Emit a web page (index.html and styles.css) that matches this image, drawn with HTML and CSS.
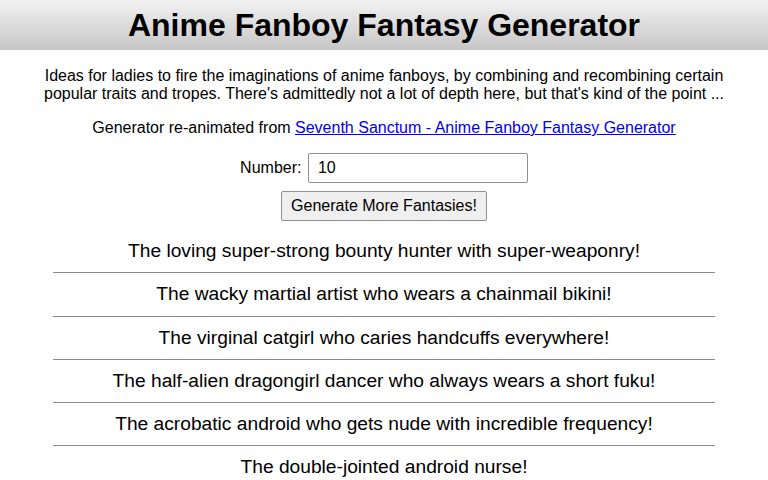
FILE: index.html
```html
<!DOCTYPE html>
<html>
<head>
<meta charset="utf-8">
<link rel="stylesheet" href="styles.css">
</head>
<body>
<header class="top">
  <h1 class="title">Anime Fanboy Fantasy Generator</h1>
</header>
<main class="main">
  <p class="intro">Ideas for ladies to fire the imaginations of anime fanboys, by combining and recombining certain popular traits and tropes. There's admittedly not a lot of depth here, but that's kind of the point ...</p>
  <p class="credit">Generator re-animated from <a href="#">Seventh Sanctum - Anime Fanboy Fantasy Generator</a></p>
  <div class="form">
    <label class="num-row">Number: <input class="num" type="text" value="10"></label>
    <button class="gen">Generate More Fantasies!</button>
  </div>
  <ul class="results">
    <li>The loving super-strong bounty hunter with super-weaponry!</li>
    <li>The wacky martial artist who wears a chainmail bikini!</li>
    <li>The virginal catgirl who caries handcuffs everywhere!</li>
    <li>The half-alien dragongirl dancer who always wears a short fuku!</li>
    <li>The acrobatic android who gets nude with incredible frequency!</li>
    <li>The double-jointed android nurse!</li>
  </ul>
</main>
</body>
</html>
```
FILE: styles.css
```css
html, body {
  margin: 0;
  padding: 0;
  background: #fff;
  font-family: "Liberation Sans", Arial, sans-serif;
  color: #000;
}
.top {
  height: 50px;
  background: linear-gradient(to bottom, #f2f2f2, #c6c6c6);
  display: flex;
  align-items: center;
  justify-content: center;
}
.title {
  margin: 0;
  font-size: 32px;
  font-weight: bold;
}
.main {
  width: 700px;
  margin: 0 auto;
  text-align: center;
  padding-top: 17px;
}
.intro {
  margin: 0 0 16px;
  font-size: 16px;
  line-height: 18px;
}
.credit {
  margin: 0 0 16px;
  font-size: 16px;
  line-height: 18px;
}
.credit a {
  color: #0000ee;
}
.form {
  display: flex;
  flex-direction: column;
  align-items: center;
  gap: 8px;
}
.num-row {
  font-size: 16px;
}
.num {
  width: 220px;
  height: 30px;
  box-sizing: border-box;
  border: 1px solid #8f8f8f;
  border-radius: 2px;
  padding: 0 9px;
  font-family: inherit;
  font-size: 16px;
  margin-left: 2px;
}
.gen {
  height: 30px;
  padding: 0 9px;
  font-family: inherit;
  font-size: 16px;
  background: #efefef;
  border: 1px solid #8f8f8f;
  border-radius: 2px;
  color: #000;
}
.results {
  list-style: none;
  margin: 9px 0 0;
  padding: 0 19px;
}
.results li {
  font-size: 19.2px;
  line-height: 22.25px;
  padding: 10px 0 10px;
  border-bottom: 1px solid #8a8a8a;
}
.results li:last-child {
  border-bottom: none;
}
```
